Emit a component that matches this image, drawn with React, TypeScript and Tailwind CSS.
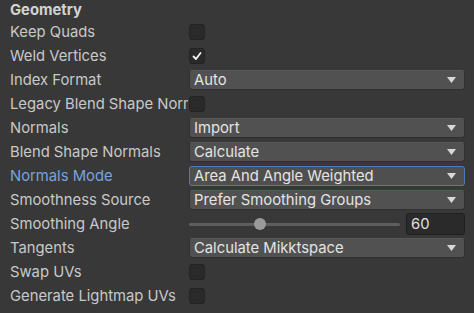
import React from 'react';

type Row =
  | { label: string; kind: 'check'; checked?: boolean }
  | { label: string; kind: 'select'; value: string; focused?: boolean }
  | { label: string; kind: 'slider'; value: number };

const rows: Row[] = [
  { label: 'Keep Quads', kind: 'check' },
  { label: 'Weld Vertices', kind: 'check', checked: true },
  { label: 'Index Format', kind: 'select', value: 'Auto' },
  { label: 'Legacy Blend Shape Normals', kind: 'check' },
  { label: 'Normals', kind: 'select', value: 'Import' },
  { label: 'Blend Shape Normals', kind: 'select', value: 'Calculate' },
  { label: 'Normals Mode', kind: 'select', value: 'Area And Angle Weighted', focused: true },
  { label: 'Smoothness Source', kind: 'select', value: 'Prefer Smoothing Groups' },
  { label: 'Smoothing Angle', kind: 'slider', value: 60 },
  { label: 'Tangents', kind: 'select', value: 'Calculate Mikktspace' },
  { label: 'Swap UVs', kind: 'check' },
  { label: 'Generate Lightmap UVs', kind: 'check' },
];

function Checkbox({ checked }: { checked?: boolean }) {
  return (
    <div className="flex h-4 w-4 items-center justify-center rounded-[3px] border border-[#232323] bg-[#2a2a2a]">
      {checked && (
        <svg width="12" height="12" viewBox="0 0 12 12">
          <path d="M2.5 6.5 L5 9 L9.5 3" fill="none" stroke="#f2f2f2" strokeWidth="1.8" strokeLinecap="round" strokeLinejoin="round" />
        </svg>
      )}
    </div>
  );
}

function Select({ value, focused }: { value: string; focused?: boolean }) {
  return (
    <div
      className={
        focused
          ? 'flex h-5 w-full items-center justify-between rounded-[3px] border border-[#4a7cb8] bg-[#4f4f4f] pl-1 pr-2'
          : 'flex h-5 w-full items-center justify-between rounded-[3px] border border-[#303030] border-t-[#585858] bg-[#515151] pl-1 pr-2'
      }
    >
      <span className="truncate text-[#e4e4e4]">{value}</span>
      <svg width="9" height="6" viewBox="0 0 9 6">
        <path d="M0 0 H9 L4.5 6 Z" fill="#d8d8d8" />
      </svg>
    </div>
  );
}

function Slider({ value }: { value: number }) {
  return (
    <div className="flex w-full items-center gap-1.5">
      <div className="relative flex h-3 flex-1 items-center">
        <div className="h-[3px] w-full rounded-full bg-[#5e5e5e]" />
        <div className="absolute left-[65px] h-3 w-3 rounded-full bg-[#9a9a9a]" />
      </div>
      <div className="flex h-[22px] w-[59px] items-center rounded-[3px] border border-[#202020] bg-[#2a2a2a] px-1 text-[#e0e0e0]">
        {value}
      </div>
    </div>
  );
}

export default function App() {
  return (
    <div className="h-[313px] w-[474px] overflow-hidden bg-[#383838] text-[14.8px] font-['Inter','Liberation_Sans',sans-serif] text-[#c8c8c8]">
      <div className="flex h-5 items-center pl-2.5 font-bold text-[#d2d2d2]">Geometry</div>
      {rows.map((row) => (
        <div key={row.label} className="flex h-6 items-center pl-2.5 pr-[9px]">
          <div
            className={
              row.kind === 'select' && row.focused
                ? 'w-[178px] shrink-0 overflow-hidden whitespace-nowrap text-[#7aa3dc]'
                : 'w-[178px] shrink-0 overflow-hidden whitespace-nowrap'
            }
          >
            {row.label}
          </div>
          <div className="ml-px flex flex-1 items-center">
            {row.kind === 'check' && <Checkbox checked={row.checked} />}
            {row.kind === 'select' && <Select value={row.value} focused={row.focused} />}
            {row.kind === 'slider' && <Slider value={row.value} />}
          </div>
        </div>
      ))}
    </div>
  );
}
